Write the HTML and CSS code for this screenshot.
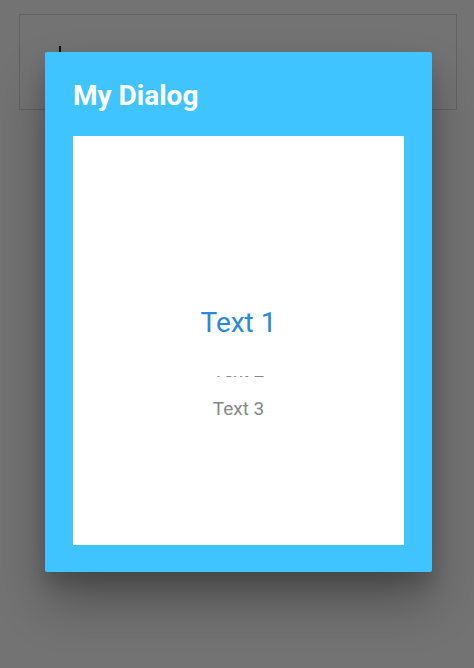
FILE: index.html
```html
<!DOCTYPE html>
<html>
<head>
<meta charset="utf-8">
<link rel="stylesheet" href="styles.css">
</head>
<body>
<div class="page">
  <div class="input"><span class="cursor"></span></div>
</div>
<div class="dialog">
  <div class="title">My Dialog</div>
  <div class="content">
    <div class="item selected">Text 1</div>
    <div class="clip"><div class="item">Text 2</div></div>
    <div class="item third">Text 3</div>
  </div>
</div>
</body>
</html>
```
FILE: styles.css
```css
html, body {
  margin: 0;
  padding: 0;
  width: 474px;
  height: 668px;
  background: #737373;
  overflow: hidden;
  font-family: Roboto, "Liberation Sans", sans-serif;
}
.page {
  padding: 14px 17px 0 19px;
}
.input {
  border: 1px solid #626262;
  padding: 31px 0 0 39px;
  height: 63px;
}
.cursor {
  display: block;
  width: 2px;
  height: 8px;
  background: #111;
}
.dialog {
  position: absolute;
  left: 45px;
  top: 52px;
  width: 387px;
  height: 520px;
  background: #40c4ff;
  border-radius: 2px;
  box-shadow: 0 30px 50px rgba(0, 0, 0, 0.3), 0 12px 18px rgba(0, 0, 0, 0.14);
  padding: 0 28px 27px;
  box-sizing: border-box;
  display: flex;
  flex-direction: column;
}
.title {
  color: #fff;
  font-weight: 700;
  font-size: 28px;
  line-height: 32px;
  padding: 28px 0 24px;
}
.content {
  flex: 1;
  background: #fff;
  display: flex;
  flex-direction: column;
  align-items: center;
  padding-top: 169px;
}
.item {
  font-size: 19px;
  line-height: 24px;
  color: #888888;
}
.selected {
  font-size: 28px;
  line-height: 36px;
  color: #2a8ad6;
}
.clip {
  height: 3px;
  overflow: hidden;
  margin-top: 35px;
}
.clip .item {
  margin-top: -15px;
  line-height: 20px;
}
.third {
  margin-top: 18px;
}
```
